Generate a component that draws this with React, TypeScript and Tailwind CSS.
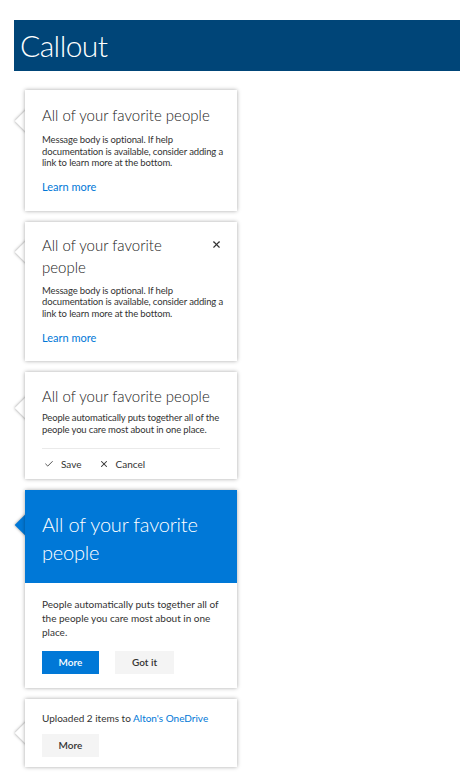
import { Check, X } from "lucide-react";

const font = { fontFamily: "Lato, 'Open Sans', sans-serif" };

const Beak = ({ top, blue }: { top: number; blue?: boolean }) => (
  <div
    className={`absolute left-[-7px] w-[16px] h-[16px] rotate-45 shadow-[0_0_3px_rgba(0,0,0,0.45)] ${
      blue ? "bg-[#0078d7]" : "bg-white"
    }`}
    style={{ top }}
  />
);

const Card = ({
  beak,
  blue,
  children,
}: {
  beak: number;
  blue?: boolean;
  children: React.ReactNode;
}) => (
  <div className="relative w-[212px] ml-[25px]">
    <Beak top={beak} blue={blue} />
    <div className="relative bg-white shadow-[0_0_4px_rgba(0,0,0,0.35)]">{children}</div>
  </div>
);

const Body = ({ children }: { children: React.ReactNode }) => (
  <p className="text-[9.5px] leading-[11.5px] text-[#333] tracking-[-0.015em]">{children}</p>
);

const Link = ({ children }: { children: React.ReactNode }) => (
  <span className="text-[11px] text-[#0078d7]">{children}</span>
);

export default function App() {
  return (
    <div className="w-[474px] h-[779px] bg-white pt-5 overflow-hidden" style={font}>
      <div className="mx-[14px] h-[51px] bg-[#004578] flex items-center pl-[6px]">
        <h1 className="text-[30px] font-light text-white tracking-[-0.02em]">Callout</h1>
      </div>

      <div className="flex flex-col gap-[11px] mt-[19px]">
        <Card beak={23}>
          <div className="pl-[17px] pr-[12px] pt-[14px] pb-[14px] relative z-10 bg-white">
            <h2 className="text-[15px] font-light text-[#1a1a1a] leading-[22px] mb-[8px]">
              All of your favorite people
            </h2>
            <Body>
              Message body is optional. If help documentation is available, consider adding a
              link to learn more at the bottom.
            </Body>
            <div className="mt-[4px]">
              <Link>Learn more</Link>
            </div>
          </div>
        </Card>

        <Card beak={22}>
          <div className="pl-[17px] pr-[12px] pt-[12px] pb-[13px] relative z-10 bg-white">
            <div className="flex justify-between">
              <h2 className="text-[15px] font-light text-[#1a1a1a] leading-[22px] mb-[7px] w-[140px]">
                All of your favorite people
              </h2>
              <X size={11} strokeWidth={2.5} className="mt-[5px] mr-[3px] text-[#333]" />
            </div>
            <Body>
              Message body is optional. If help documentation is available, consider adding a
              link to learn more at the bottom.
            </Body>
            <div className="mt-[5px]">
              <Link>Learn more</Link>
            </div>
          </div>
        </Card>

        <Card beak={28}>
          <div className="pl-[17px] pr-[12px] pt-[13px] relative z-10 bg-white">
            <h2 className="text-[15px] font-light text-[#1a1a1a] leading-[22px] mb-[5px]">
              All of your favorite people
            </h2>
            <Body>
              People automatically puts together all of the people you care most about in one place.
            </Body>
            <div className="border-t border-[#eaeaea] mt-[13px] mr-[5px] h-[31px] flex items-center gap-[17px] text-[10px] text-[#333]">
              <span className="flex items-center gap-[7px] pl-[2px]">
                <Check size={10} strokeWidth={2} />
                Save
              </span>
              <span className="flex items-center gap-[7px]">
                <X size={10} strokeWidth={2.5} />
                Cancel
              </span>
            </div>
          </div>
        </Card>

        <Card beak={27} blue>
          <div className="relative z-10 bg-white">
            <div className="bg-[#0078d7] px-[17px] pt-[20px] pb-[17px]">
              <h2 className="text-[20px] font-light text-white leading-[28px] tracking-[-0.01em]">
                All of your favorite people
              </h2>
            </div>
            <div className="pl-[17px] pr-[12px] pt-[14px] pb-[14px]">
              <p className="text-[10px] leading-[14px] text-[#333]">
                People automatically puts together all of the people you care most about in one
                place.
              </p>
              <div className="flex gap-[16px] mt-[12px]">
                <button className="w-[57px] h-[23px] bg-[#0078d7] text-white text-[10px] font-semibold">
                  More
                </button>
                <button className="w-[59px] h-[23px] bg-[#f4f4f4] text-[#333] text-[10px] font-semibold">
                  Got it
                </button>
              </div>
            </div>
          </div>
        </Card>

        <Card beak={26}>
          <div className="pl-[17px] pr-[12px] pt-[13px] pb-[10px] relative z-10 bg-white">
            <p className="text-[10px] leading-[12px] text-[#333]">
              Uploaded 2 items to <span className="text-[#0078d7]">Alton's OneDrive</span>
            </p>
            <button className="mt-[10px] w-[57px] h-[23px] bg-[#f4f4f4] text-[#333] text-[10px] font-semibold">
              More
            </button>
          </div>
        </Card>
      </div>
    </div>
  );
}
